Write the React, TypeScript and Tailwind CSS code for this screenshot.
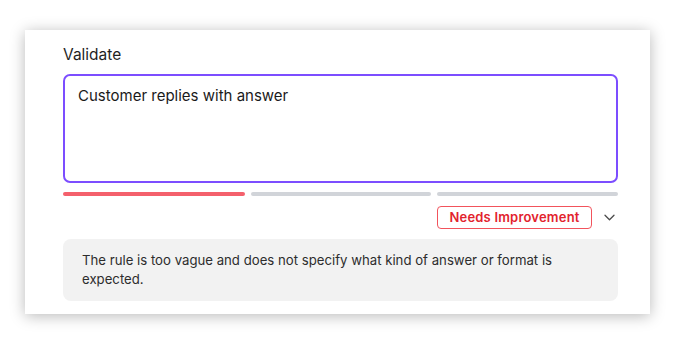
import React from "react"

const bars = [
  { w: "w-[182px]", color: "bg-[#f4606c]" },
  { w: "w-[180px]", color: "bg-[#d1d4d9]" },
  { w: "flex-1", color: "bg-[#d1d4d9]" },
]

function Chevron() {
  return (
    <svg width="11" height="7" viewBox="0 0 11 7" fill="none" className="text-[#4b4b4b]">
      <path d="M1 1.2 L5.5 5.7 L10 1.2" stroke="currentColor" strokeWidth="1.3" strokeLinecap="round" strokeLinejoin="round" />
    </svg>
  )
}

export default function App() {
  return (
    <div className="w-[680px] h-[339px] bg-white pt-[30px] pl-[25px] font-['Inter',sans-serif]">
      <div className="w-[625px] h-[284px] bg-white shadow-[0_2px_14px_rgba(0,0,0,0.28)] pt-[15px] pl-[38px]">
        <div className="text-[15.5px] leading-[20px] text-[#1f1f1f]">Validate</div>

        <div className="mt-[9px] w-[555px] h-[109px] rounded-[7px] border-2 border-[#7c4dff] pl-[13px] pt-[10px] text-[15px] leading-[20px] text-[#1a1a1a]">
          Customer replies with answer
        </div>

        <div className="mt-[9px] w-[555px] flex gap-[6px]">
          {bars.map((b, i) => (
            <div key={i} className={`${b.w} ${b.color} h-[4px] rounded-full`} />
          ))}
        </div>

        <div className="mt-[10px] w-[555px] flex items-center justify-end">
          <div className="h-[23px] w-[155px] rounded-[4px] border border-[#f2535c] flex items-center justify-center text-[13px] font-semibold text-[#e2232d] tracking-[0.2px]">
            Needs Improvement
          </div>
          <div className="w-[26px] flex justify-end pr-[3px]">
            <Chevron />
          </div>
        </div>

        <div className="mt-[10px] w-[555px] h-[62px] rounded-[8px] bg-[#f2f2f2] pl-[19px] pr-[19px] pt-[12px] text-[13.2px] leading-[19px] text-[#2d2d2d]">
          The rule is too vague and does not specify what kind of answer or format is expected.
        </div>
      </div>
    </div>
  )
}
